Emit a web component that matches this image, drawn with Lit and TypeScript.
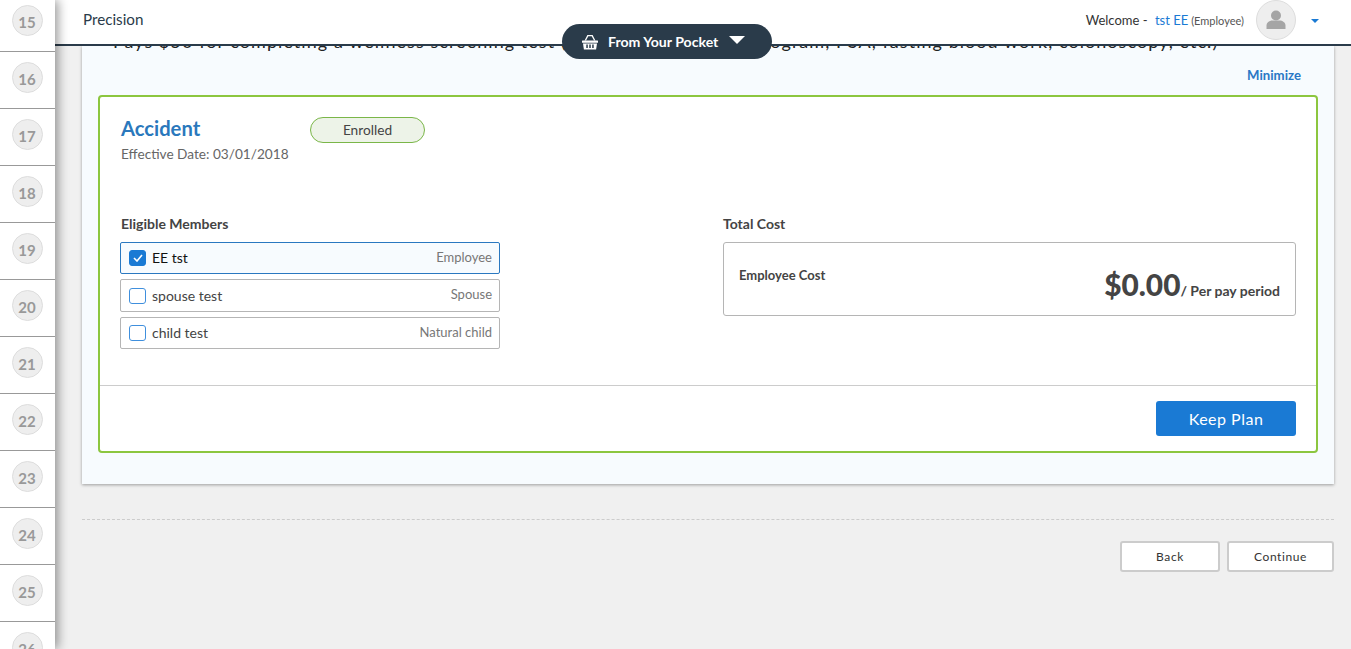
import { LitElement, html, css } from "lit";
import { customElement } from "lit/decorators.js";

const FONT = css`"Lato", "Open Sans", sans-serif`;
const STEPS = [15, 16, 17, 18, 19, 20, 21, 22, 23, 24, 25, 26];
const MEMBERS = [
  { name: "EE tst", rel: "Employee", on: true },
  { name: "spouse test", rel: "Spouse", on: false },
  { name: "child test", rel: "Natural child", on: false },
];

@customElement("app-root")
export class AppRoot extends LitElement {
  static styles = css`
    :host { display: block; width: 1351px; height: 649px; overflow: hidden; background: #f0f0f0; font-family: ${FONT}; color: #444; }
    * { box-sizing: border-box; }
    .page { display: flex; height: 649px; position: relative; }
    .side { width: 55px; flex: none; background: #fff; box-shadow: 3px 0 10px rgba(0,0,0,.4); z-index: 3; overflow: hidden; height: 649px; }
    .step { height: 57px; border-bottom: 1px solid #999; display: flex; justify-content: center; padding: 10px 1px 0 0; }
    .step:first-child { height: 52px; padding-top: 5px; }
    .circle { width: 31px; height: 31px; border-radius: 50%; background: #eee; border: 1px solid #ddd; color: #999; font-size: 15px; font-weight: 700; display: flex; align-items: center; justify-content: center; padding-top: 2px; }
    .main { flex: 1; min-width: 0; display: flex; flex-direction: column; position: relative; }
    .top { height: 46px; flex: none; background: #fff; border-bottom: 2px solid #2a3b4a; display: flex; align-items: center; padding: 0 32px 6px 28px; position: relative; z-index: 2; }
    .brand { font-size: 15.2px; color: #2a3b4a; flex: 1; }
    .welcome { font-size: 13px; color: #333; white-space: pre; margin-top: 2px; }
    .user { font-size: 13px; color: #1a7ad4; margin: 2px 0 0 4px; }
    .role { font-size: 11px; color: #555; margin: 2px 0 0 3px; }
    .avatar { width: 40px; height: 40px; border-radius: 50%; background: #eee; border: 1px solid #ddd; margin: 2px 0 0 12px; display: flex; align-items: center; justify-content: center; }
    .caret { width: 0; height: 0; border-left: 4px solid transparent; border-right: 4px solid transparent; border-top: 4px solid #1a7ad4; margin: 4px 0 0 15px; }
    .pill { position: absolute; left: 507px; top: 24px; width: 210px; height: 35px; border-radius: 18px; background: #2a3b4a; color: #fff; z-index: 4; display: flex; align-items: center; padding-left: 20px; font-size: 14.1px; font-weight: 700; }
    .pill span { margin-left: 10px; }
    .pill i { width: 0; height: 0; border-left: 8px solid transparent; border-right: 8px solid transparent; border-top: 8px solid #fff; margin: -4px 0 0 11px; }
    .panel { margin-left: 27px; margin-right: 17px; height: 438px; background: #f7fbfe; box-shadow: 0 1px 3px rgba(0,0,0,.35); padding: 0 16px; flex: none; }
    .cut { height: 0; margin: -16px 0 0 15px; white-space: nowrap; font-size: 18px; line-height: 22px; letter-spacing: 1.05px; color: #222; }
    .minrow { text-align: right; font-size: 13.2px; font-weight: 700; color: #2a78c5; padding: 21px 17px 0 0; height: 49px; margin-top: 16px; line-height: 16px; }
    .card { border: 2px solid #8cc63f; border-radius: 4px; background: #fff; height: 358px; display: flex; flex-direction: column; }
    .body { flex: 1; padding: 19px 20px 0; display: flex; flex-direction: column; }
    .head { display: flex; height: 100px; }
    .titles { width: 190px; padding-left: 1px; }
    h2 { margin: 0; font-size: 20.2px; line-height: 24px; font-weight: 700; color: #2a78bc; }
    .date { font-size: 13.65px; line-height: 16px; margin-top: 6px; color: #666; }
    .badge { width: 115px; height: 26px; margin-top: 1px; padding-bottom: 2px; border-radius: 13px; border: 1px solid #7ab648; background: #edf3e8; color: #444; font-size: 13.7px; display: flex; align-items: center; justify-content: center; }
    .cols { display: flex; }
    .left { width: 380px; margin-right: 223px; }
    .right { width: 573px; }
    h3 { margin: 0 0 10px; font-size: 14px; line-height: 16px; font-weight: 700; color: #444; }
    .left h3 { padding-left: 1px; }
    .member { height: 32px; border: 1px solid #b5b5b5; border-radius: 2px; display: flex; align-items: center; padding: 0 7px 0 8px; margin-bottom: 5px; font-size: 14px; color: #444; }
    .member + .member { height: 33px; }
    .member + .member + .member { height: 32px; }
    .name { margin-top: -1px; }
    .member.on { border-color: #2a78c0; background: #f7fbfe; color: #111; }
    .box { width: 17px; height: 16px; border-radius: 3px; border: 1.5px solid #3f8fdd; background: #fff; margin-right: 6px; display: flex; align-items: center; justify-content: center; }
    .on .box { background: #1a7ad4; border-color: #1a7ad4; }
    .rel { margin-left: auto; font-size: 13px; color: #777; margin-top: -3px; }
    .costbox { height: 74px; border: 1px solid #b5b5b5; border-radius: 3px; padding: 0 15px; display: flex; justify-content: space-between; }
    .costlabel { font-size: 13px; font-weight: 700; margin-top: 24px; line-height: 16px; color: #444; }
    .costval { font-size: 14px; font-weight: 700; margin-top: 22px; line-height: 40px; color: #444; white-space: nowrap; }
    .costval b { font-size: 29.8px; }
    .foot { height: 66px; border-top: 1px solid #ccc; display: flex; justify-content: flex-end; align-items: flex-start; padding: 15px 20px 0 0; }
    .keep { width: 140px; height: 35px; background: #1a7ad4; color: #fff; border: 0; border-radius: 3px; font: 16px ${FONT}; letter-spacing: .5px; padding: 0; }
    .dash { margin: 35px 17px 0 27px; border-top: 1px dashed #ccc; height: 0; }
    .nav { display: flex; justify-content: flex-end; gap: 7px; margin: 21px 17px 0 0; }
    .nav button { height: 31px; background: #fff; border: 2px solid #ccc; border-radius: 3px; font: 12px ${FONT}; letter-spacing: .6px; color: #333; padding: 0; }
    .back { width: 100px; }
    .cont { width: 107px; }
  `;

  render() {
    return html`
      <div class="page">
        <nav class="side">
          ${STEPS.map((n) => html`<div class="step"><div class="circle">${n}</div></div>`)}
        </nav>
        <div class="main">
          <header class="top">
            <div class="brand">Precision</div>
            <span class="welcome">Welcome - </span><span class="user">tst EE</span><span class="role">(Employee)</span>
            <div class="avatar">
              <svg width="20" height="20" viewBox="0 0 20 20"><circle cx="10" cy="5.500" r="5" fill="#a5a5a5"/><path d="M.5 19v-3.500C.5 12.500 3.500 10.500 6.500 10.500h7c3 0 6 2 6 5V19z" fill="#a5a5a5"/></svg>
            </div>
            <div class="caret"></div>
          </header>
          <div class="pill">
            <svg width="16" height="16" viewBox="0 0 16 16" fill="#fff">
              <path d="M2.600 6.500 5.400 1h5.200l2.800 5.500H12L9.700 2.200H6.300L4 6.500z"/>
              <rect x="0" y="6.500" width="16" height="2.300" rx=".4"/>
              <path d="M1 9.500h14l-.9 6H1.900z"/>
              <path fill="#2a3b4a" d="M4.300 10.500h1.500v3.500H4.300zM7.250 10.500h1.500v3.500h-1.500zM10.200 10.500h1.500v3.500h-1.500z"/>
            </svg>
            <span>From Your Pocket</span><i></i>
          </div>
          <section class="panel">
            <div class="cut">Pays $50 for completing a wellness screening test (annual physical, mammogram, PSA, fasting blood work, colonoscopy, etc.)</div>
            <div class="minrow">Minimize</div>
            <div class="card">
              <div class="body">
                <div class="head">
                  <div class="titles">
                    <h2>Accident</h2>
                    <div class="date">Effective Date: 03/01/2018</div>
                  </div>
                  <div class="badge">Enrolled</div>
                </div>
                <div class="cols">
                  <div class="left">
                    <h3>Eligible Members</h3>
                    ${MEMBERS.map((m) => html`
                      <div class="member ${m.on ? "on" : ""}">
                        <div class="box">${m.on ? html`<svg width="10" height="8" viewBox="0 0 10 8"><path d="M1 4l3 3 5-6" fill="none" stroke="#fff" stroke-width="1.600"/></svg>` : ""}</div>
                        <span class="name">${m.name}</span><span class="rel">${m.rel}</span>
                      </div>`)}
                  </div>
                  <div class="right">
                    <h3>Total Cost</h3>
                    <div class="costbox">
                      <div class="costlabel">Employee Cost</div>
                      <div class="costval"><b>$0.00</b>/ Per pay period</div>
                    </div>
                  </div>
                </div>
              </div>
              <div class="foot"><button class="keep">Keep Plan</button></div>
            </div>
          </section>
          <div class="dash"></div>
          <div class="nav"><button class="back">Back</button><button class="cont">Continue</button></div>
        </div>
      </div>
    `;
  }
}
